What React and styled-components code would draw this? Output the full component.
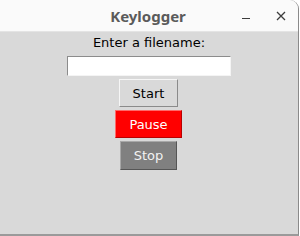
import React from "react";
import styled, { createGlobalStyle } from "styled-components";

const Global = createGlobalStyle`
  html, body { margin: 0; padding: 0; background: #ffffff; }
  body { width: 300px; height: 236px; overflow: hidden; }
`;

const Window = styled.div`
  width: 298px;
  height: 234px;
  display: flex;
  flex-direction: column;
  border-right: 1px solid #8a8a8a;
  border-bottom: 2px solid #9a9a9a;
  border-top-right-radius: 9px;
  overflow: hidden;
  background: #d9d9d9;
`;

const TitleBar = styled.div`
  height: 32px;
  flex: none;
  background: #fafafa;
  border-bottom: 1px solid #e4e4e4;
  box-sizing: border-box;
  position: relative;
  display: flex;
  align-items: center;
  justify-content: center;
`;

const Title = styled.span`
  font-family: "Noto Sans", "DejaVu Sans", sans-serif;
  font-weight: 700;
  font-size: 15px;
  color: #5b5b5b;
  margin-left: -2px;
`;

const Controls = styled.div`
  position: absolute;
  right: 12px;
  top: 0;
  height: 100%;
  display: flex;
  align-items: center;
  gap: 25px;
`;

const Body = styled.div`
  flex: 1;
  display: flex;
  flex-direction: column;
  align-items: center;
  font-family: "DejaVu Sans", sans-serif;
  font-size: 13px;
  color: #000;
`;

const Label = styled.div`
  height: 22px;
  line-height: 22px;
`;

const Input = styled.input`
  box-sizing: border-box;
  width: 164px;
  height: 20px;
  margin-top: 2px;
  background: #ffffff;
  border: 1px solid;
  border-color: #8c8c8c #f4f4f4 #f4f4f4 #8c8c8c;
  outline: none;
  padding: 0;
`;

const Button = styled.button`
  box-sizing: border-box;
  width: ${(p) => p.$w}px;
  height: ${(p) => p.$h}px;
  margin-top: ${(p) => p.$mt}px;
  margin-right: 1px;
  background: ${(p) => p.$bg};
  color: ${(p) => p.$fg};
  font-family: "DejaVu Sans", sans-serif;
  font-size: 13px;
  padding: 0;
  border: 1px solid;
  border-color: ${(p) => p.$light} ${(p) => p.$dark} ${(p) => p.$dark} ${(p) => p.$light};
`;

export default function App() {
  return (
    <>
      <Global />
      <Window>
        <TitleBar>
          <Title>Keylogger</Title>
          <Controls>
            <svg width="10" height="10" viewBox="0 0 10 10">
              <line x1="1" y1="7.5" x2="9" y2="7.5" stroke="#3c3c3c" strokeWidth="1.2" />
            </svg>
            <svg width="10" height="10" viewBox="0 0 10 10">
              <path d="M1 1 L9 9 M9 1 L1 9" stroke="#3c3c3c" strokeWidth="1.3" />
            </svg>
          </Controls>
        </TitleBar>
        <Body>
          <Label>Enter a filename:</Label>
          <Input />
          <Button $w={59} $h={28} $mt={3} $bg="#d9d9d9" $fg="#000" $light="#f6f6f6" $dark="#8a8a8a">
            Start
          </Button>
          <Button $w={67} $h={28} $mt={3} $bg="#ff0000" $fg="#ffffff" $light="#ff6a6a" $dark="#b80000">
            Pause
          </Button>
          <Button $w={57} $h={29} $mt={3} $bg="#808080" $fg="#f2f2f2" $light="#a8a8a8" $dark="#555555">
            Stop
          </Button>
        </Body>
      </Window>
    </>
  );
}
